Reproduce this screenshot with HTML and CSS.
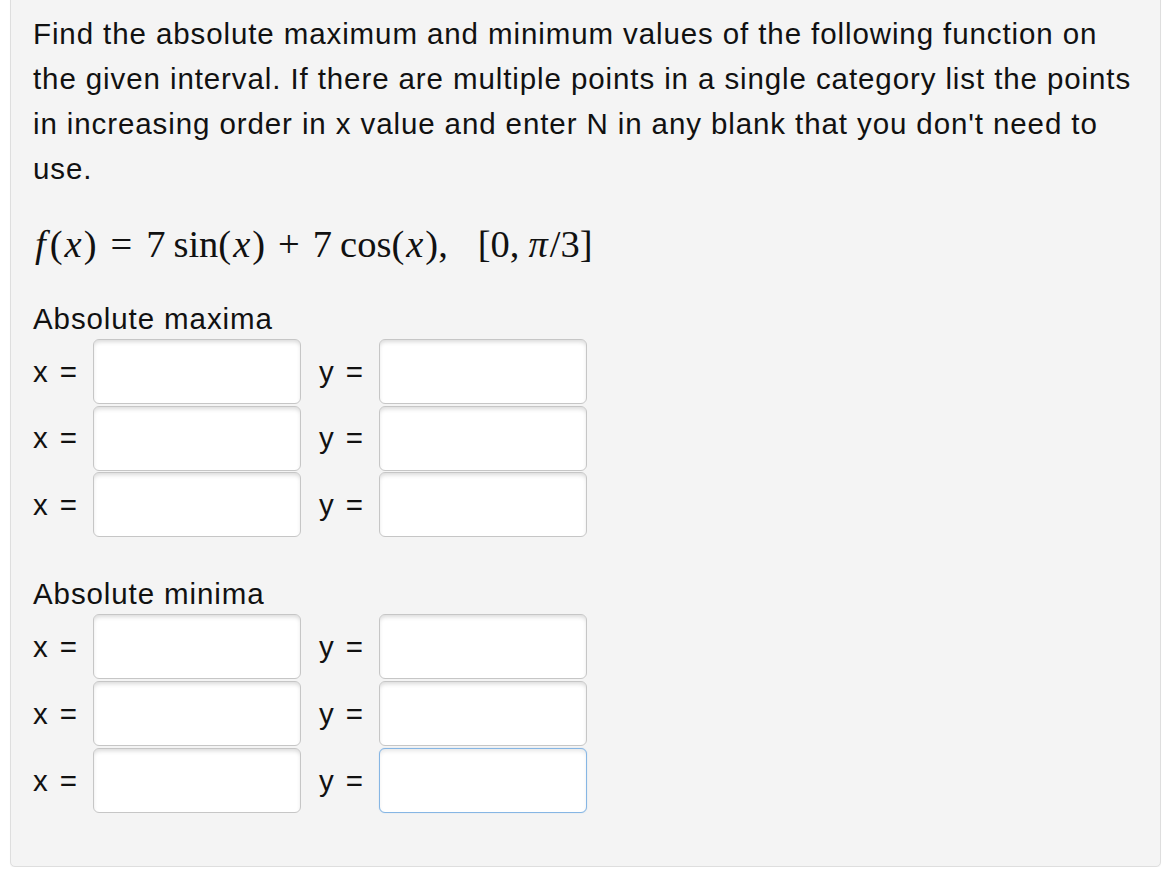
FILE: index.html
```html
<!DOCTYPE html>
<html>
<head>
<meta charset="utf-8">
<link rel="stylesheet" href="styles.css">
</head>
<body>
<div class="panel">
  <p class="prompt">Find the absolute maximum and minimum values of the following function on<br>the given interval. If there are multiple points in a single category list the points<br>in increasing order in x value and enter N in any blank that you don't need to<br>use.</p>
  <div class="formula"><span class="it vf">f</span>(<span class="it vx">x</span>)<span class="op">=</span>7<span class="fn">sin</span>(<span class="it vx">x</span>)<span class="op bin">+</span>7<span class="fn">cos</span>(<span class="it vx">x</span>),<span class="sp"></span>[0,<span class="thin"></span><span class="it vx">π</span>/3]</div>

  <div class="section">
    <div class="heading">Absolute maxima</div>
    <div class="rows">
      <div class="row"><span class="lbl">x =</span><input class="box" type="text"><span class="lbl lbl-y">y =</span><input class="box" type="text"></div>
      <div class="row"><span class="lbl">x =</span><input class="box" type="text"><span class="lbl lbl-y">y =</span><input class="box" type="text"></div>
      <div class="row"><span class="lbl">x =</span><input class="box" type="text"><span class="lbl lbl-y">y =</span><input class="box" type="text"></div>
    </div>
  </div>

  <div class="section section-min">
    <div class="heading">Absolute minima</div>
    <div class="rows rows-min">
      <div class="row"><span class="lbl">x =</span><input class="box" type="text"><span class="lbl lbl-y">y =</span><input class="box" type="text"></div>
      <div class="row"><span class="lbl">x =</span><input class="box" type="text"><span class="lbl lbl-y">y =</span><input class="box" type="text"></div>
      <div class="row"><span class="lbl">x =</span><input class="box" type="text"><span class="lbl lbl-y">y =</span><input class="box box-focus" type="text"></div>
    </div>
  </div>
</div>
</body>
</html>
```
FILE: styles.css
```css
html, body {
  margin: 0;
  padding: 0;
  background: #ffffff;
}

body {
  font-family: "Liberation Sans", Arial, Helvetica, sans-serif;
  color: #111;
}

.panel {
  box-sizing: border-box;
  margin: -6px 0 0 10px;
  width: 1151px;
  background: #f4f4f4;
  border: 1px solid #dedede;
  border-radius: 5px;
  box-shadow: 0 1px 1px rgba(0,0,0,0.05);
  padding: 16px 22px 53px 22px;
}

.prompt {
  margin: 0;
  font-size: 29.5px;
  letter-spacing: 0.9px;
  word-spacing: 0;
  line-height: 45px;
  white-space: nowrap;
}

.formula {
  margin-top: 28px;
  height: 50px;
  line-height: 50px;
  font-family: "Liberation Serif", "Times New Roman", serif;
  font-size: 38.5px;
  color: #111;
  white-space: nowrap;
}

.formula .it {
  font-style: italic;
  margin-right: 1px;
}

.formula .vf {
  margin: 0 4px 0 2px;
}

.formula .vx {
  margin: 0 2px 0 2px;
}

.formula .op {
  margin: 0 14px;
}

.formula .bin {
  margin: 0 13px;
}

.formula .fn {
  margin-left: 8px;
}

.formula .sp {
  display: inline-block;
  width: 30px;
}

.formula .thin {
  display: inline-block;
  width: 7px;
}

.section {
  margin-top: 35px;
}

.section-min {
  margin-top: 42px;
}

.heading {
  font-size: 29.5px;
  letter-spacing: 0.9px;
  line-height: 30px;
  height: 30px;
}

.rows {
  margin-top: 5px;
  display: flex;
  flex-direction: column;
  gap: 1.5px;
}

.rows-min {
  gap: 2px;
}

.row {
  display: flex;
  align-items: center;
  height: 65px;
}

.lbl {
  width: 60px;
  flex: none;
  font-size: 29.5px;
  letter-spacing: 0.9px;
  word-spacing: 2px;
  line-height: 30px;
}

.lbl-y {
  margin-left: 18px;
}

.box {
  box-sizing: border-box;
  width: 208px;
  height: 65px;
  margin: 0;
  padding: 0 10px;
  border: 1.5px solid #c6c6c6;
  border-radius: 6px;
  background: #ffffff;
  box-shadow: inset 0 3px 4px -1px rgba(0,0,0,0.15);
  font-size: 24px;
  outline: none;
}

.box-focus {
  border-color: #86b6e4;
  box-shadow: inset 0 3px 4px -1px rgba(0,0,0,0.10), 0 0 1px rgba(100,160,220,0.5);
}
```
